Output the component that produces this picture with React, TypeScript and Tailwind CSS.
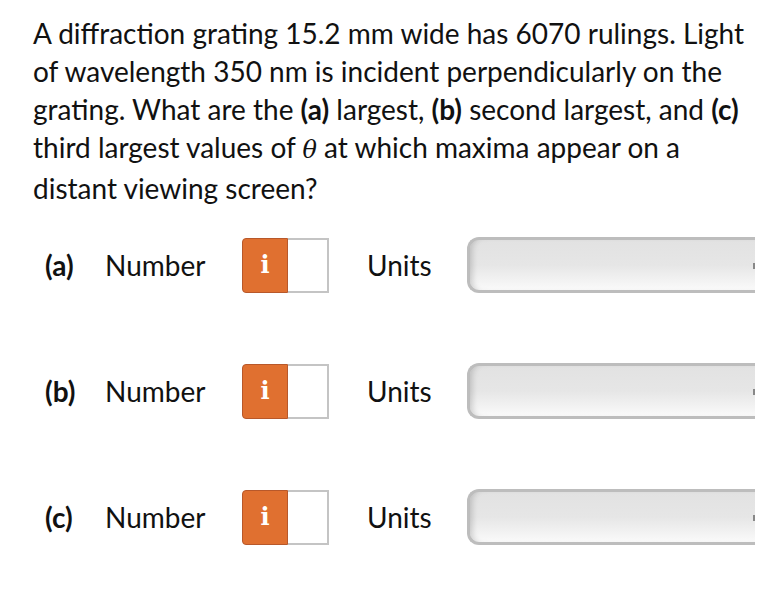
import React from 'react';

const rows = ['a', 'b', 'c'];

const InfoBox: React.FC = () => (
  <div className="flex h-[55px]">
    <div className="flex w-[46px] items-center justify-center rounded-l-[4px] border border-[#b8582a] bg-[#e07030]">
      <span className="font-['DejaVu_Serif',serif] text-[24px] font-bold leading-none text-white">i</span>
    </div>
    <div className="w-[41px] border-2 border-l-0 border-[#c4c4c4] bg-white" />
  </div>
);

const UnitsSelect: React.FC = () => (
  <div className="relative h-[56px] w-[288px] rounded-l-[12px] border-y-[3px] border-l-[3px] border-[#bdbdbd] bg-gradient-to-b from-[#e2e2e2] via-[#e6e6e6] to-[#fafafa] shadow-[inset_6px_0_6px_-4px_rgba(0,0,0,0.18)]">
    <span className="absolute right-0 top-[23px] h-[6px] w-[2px] bg-[#888]" />
  </div>
);

export default function App() {
  return (
    <div className="h-[616px] w-[784px] overflow-hidden bg-white font-['Lato',sans-serif] text-[#111]">
      <div className="flex flex-col whitespace-nowrap px-[33px] pt-[14px] text-[28px] leading-[38px]">
        <span>A diffraction grating 15.2 mm wide has 6070 rulings. Light</span>
        <span>of wavelength 350 nm is incident perpendicularly on the</span>
        <span>
          grating. What are the <b>(a)</b> largest, <b>(b)</b> second largest, and <b>(c)</b>
        </span>
        <span>
          third largest values of <i className="font-['DejaVu_Serif',serif] text-[24px]">θ</i> at which maxima appear on a
        </span>
        <span>distant viewing screen?</span>
      </div>
      <div className="mt-[30px] flex flex-col gap-[70px] pl-[45px]">
        {rows.map((r) => (
          <div key={r} className="flex items-center">
            <span className="w-[60px] text-[28px] font-bold">({r})</span>
            <span className="w-[137px] text-[28px]">Number</span>
            <InfoBox />
            <span className="ml-[38px] w-[100px] text-[28px]">Units</span>
            <UnitsSelect />
          </div>
        ))}
      </div>
    </div>
  );
}
